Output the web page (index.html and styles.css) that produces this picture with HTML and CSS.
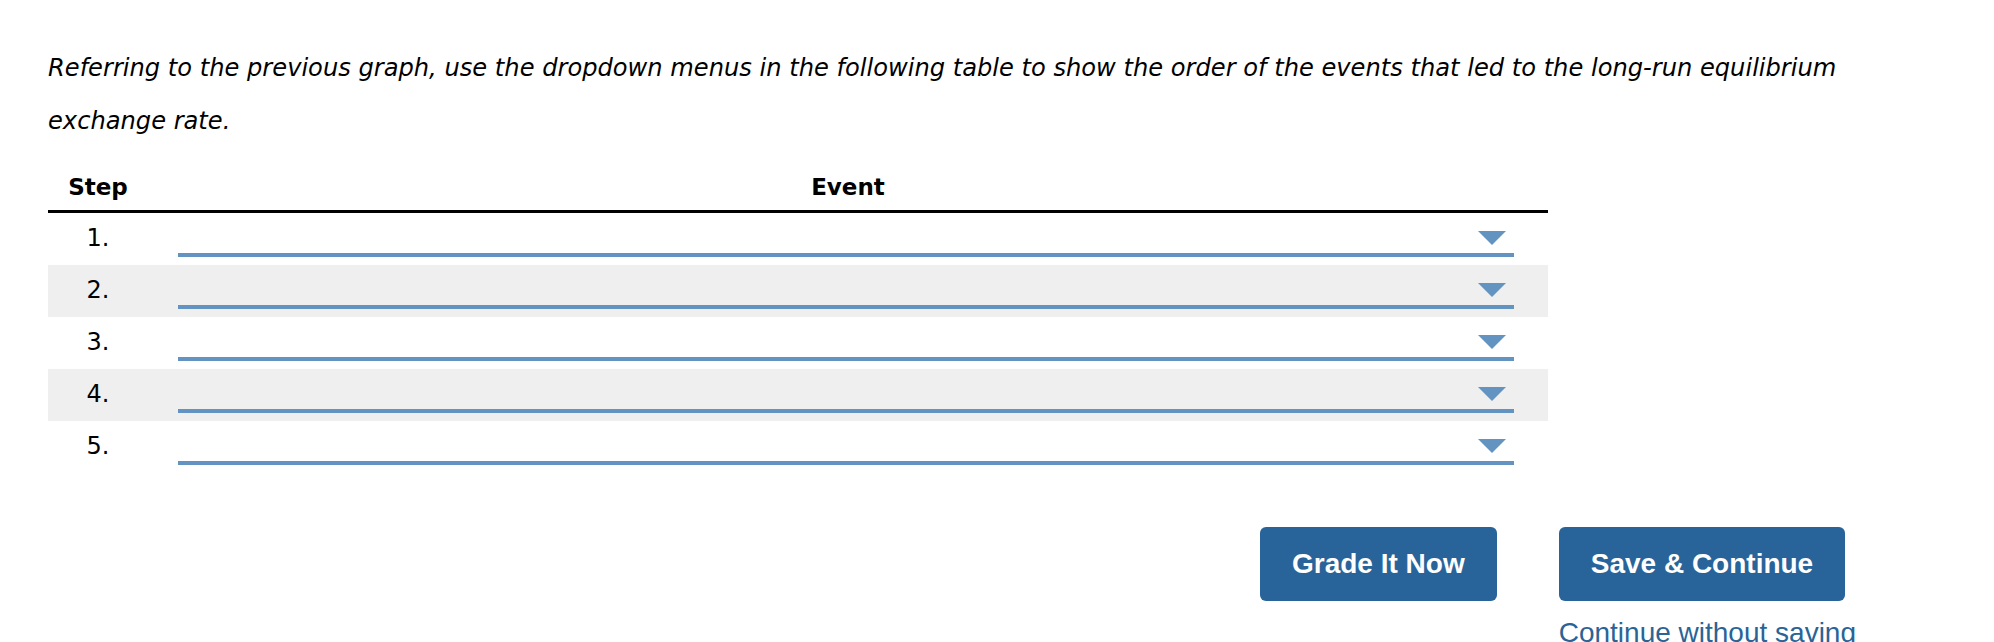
FILE: index.html
```html
<!DOCTYPE html>
<html>
<head>
<meta charset="utf-8">
<link rel="stylesheet" href="styles.css">
</head>
<body>
<div class="page">
  <p class="question">Referring to the previous graph, use the dropdown menus in the following table to show the order of the events that led to the long-run equilibrium exchange rate.</p>
  <table class="steps">
    <thead>
      <tr><th class="col-step">Step</th><th class="col-event">Event</th></tr>
    </thead>
    <tbody>
      <tr><td class="num">1.</td><td class="event"><div class="dropdown"><span class="caret"></span></div></td></tr>
      <tr class="shade"><td class="num">2.</td><td class="event"><div class="dropdown"><span class="caret"></span></div></td></tr>
      <tr><td class="num">3.</td><td class="event"><div class="dropdown"><span class="caret"></span></div></td></tr>
      <tr class="shade"><td class="num">4.</td><td class="event"><div class="dropdown"><span class="caret"></span></div></td></tr>
      <tr><td class="num">5.</td><td class="event"><div class="dropdown"><span class="caret"></span></div></td></tr>
    </tbody>
  </table>
  <div class="actions">
    <button class="btn">Grade It Now</button>
    <div class="save-col">
      <button class="btn">Save &amp; Continue</button>
      <a class="skip" href="#">Continue without saving</a>
    </div>
  </div>
</div>
</body>
</html>
```
FILE: styles.css
```css
html, body {
  margin: 0;
  padding: 0;
  background: #ffffff;
}
.page {
  padding-left: 48px;
  font-family: "DejaVu Sans", Verdana, sans-serif;
  color: #000;
}
.question {
  margin: 42px 0 0 0;
  width: 1800px;
  font-size: 24.15px;
  font-style: italic;
  line-height: 53px;
}
.steps {
  margin-top: 16px;
  width: 1500px;
  border-collapse: collapse;
}
.steps th {
  font-weight: bold;
  font-size: 23px;
  height: 46px;
  padding: 0;
  text-align: center;
  vertical-align: middle;
  border-bottom: 3px solid #000;
}
.col-step {
  width: 100px;
}
.steps td {
  height: 52px;
  padding: 0;
}
.shade td {
  background: #efefef;
}
.steps td.num {
  text-align: center;
  font-size: 24px;
  vertical-align: middle;
  height: 49px;
  padding-bottom: 3px;
}
.steps td.event {
  vertical-align: top;
  padding: 0 34px 0 30px;
}
.dropdown {
  height: 40px;
  border-bottom: 4px solid #6393c1;
  display: flex;
  justify-content: flex-end;
  align-items: flex-start;
}
.caret {
  margin-top: 18px;
  margin-right: 8px;
  width: 0;
  height: 0;
  border-left: 14px solid transparent;
  border-right: 14px solid transparent;
  border-top: 14px solid #6393c1;
}
.actions {
  margin-top: 54px;
  display: flex;
  align-items: flex-start;
  gap: 62px;
  padding-left: 1212px;
}
.save-col {
  display: flex;
  flex-direction: column;
  align-items: flex-start;
}
.btn {
  font-family: "Liberation Sans", Arial, sans-serif;
  font-weight: bold;
  font-size: 28px;
  color: #fff;
  background: #28649a;
  border: none;
  border-radius: 6px;
  height: 74px;
  padding: 0 32px;
}
.skip {
  margin-top: 16px;
  font-family: "Liberation Sans", Arial, sans-serif;
  font-size: 28px;
  color: #2a6496;
  text-decoration: none;
}
```
